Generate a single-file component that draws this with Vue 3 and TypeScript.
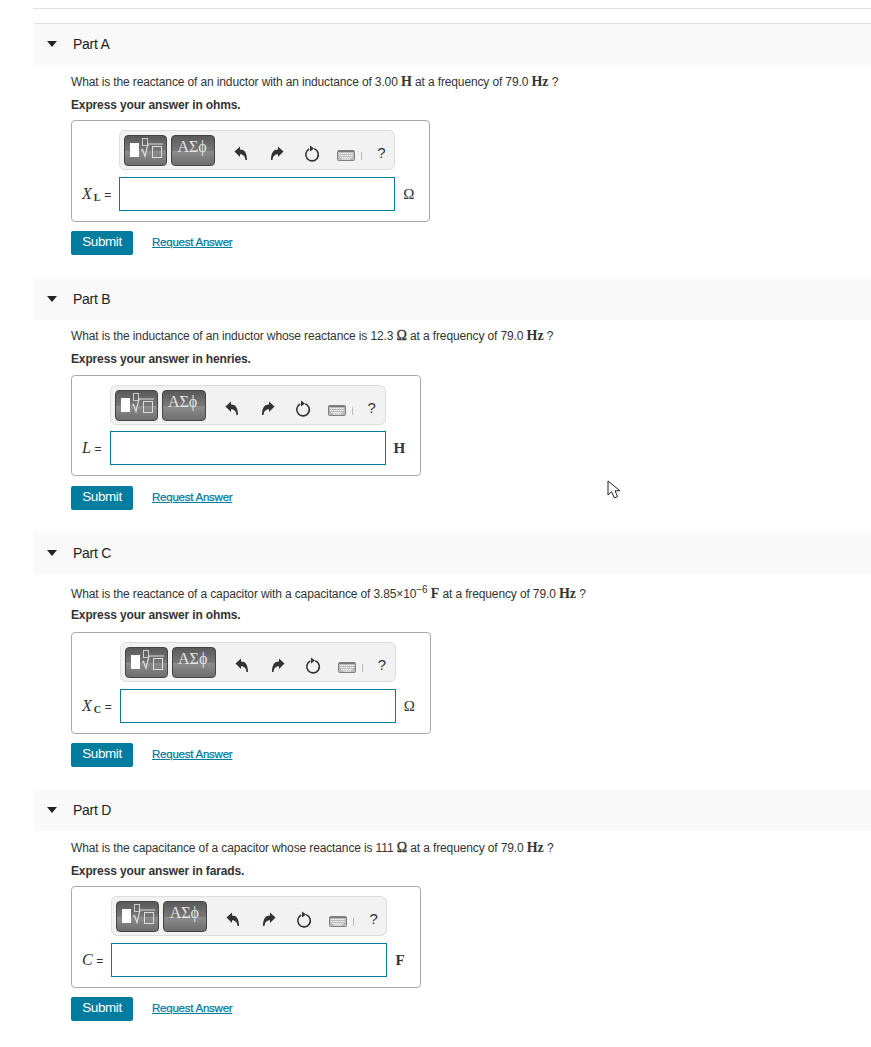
<template>
  <div class="page">
    <div class="rule"></div>
    <section v-for="part in parts" :key="part.name" class="part" :class="part.mod">
      <div class="part-head">
        <span class="caret"></span>
        <span class="part-name">{{ part.name }}</span>
      </div>
      <p class="question">
        <template v-for="(seg, i) in part.question" :key="i">
          <span v-if="seg.kind === 'math'" class="math" :class="{ omega: seg.text === 'Ω' }">{{ seg.text }}</span>
          <sup v-else-if="seg.kind === 'sup'" class="exp">{{ seg.text }}</sup>
          <template v-else>{{ seg.text }}</template>
        </template>
      </p>
      <p class="express">{{ part.express }}</p>
      <div class="answer-box">
        <div class="answer-label">
          <i>{{ part.symbol }}</i><span v-if="part.sub" class="sub">{{ part.sub }}</span>
          <span class="eq">=</span>
        </div>
        <div class="answer-main">
          <div class="toolbar">
            <button class="tpl-btn tpl-math" type="button">
              <svg width="41" height="29" viewBox="0 0 41 29">
                <rect x="5" y="7" width="9" height="14" fill="#fff" />
                <rect x="17.500" y="2.500" width="5" height="7" fill="none" stroke="#ccc" />
                <path d="M16 14.500l1.500-1 2.500 7 3-12.500h15" fill="none" stroke="#ddd" stroke-width="1.200" />
                <rect x="27.500" y="10.500" width="9" height="11" fill="none" stroke="#ddd" />
              </svg>
            </button>
            <button class="tpl-btn tpl-greek" type="button">ΑΣϕ</button>
            <svg class="tool undo" width="14" height="15" viewBox="0 0 14 15">
              <path d="M0.500 5.500L6 0.500V3.500C10.500 3.500 13 6.500 13 14H11.500C11 10.500 9.500 8.300 6 8.300V11Z" fill="#333" />
            </svg>
            <svg class="tool redo" width="14" height="15" viewBox="0 0 14 15">
              <path d="M13.500 5.500L8 0.500V3.500C3.500 3.500 1 6.500 1 14H2.500C3 10.500 4.500 8.300 8 8.300V11Z" fill="#333" />
            </svg>
            <svg class="tool reset" width="16" height="17" viewBox="0 0 16 17">
              <path d="M5.200 4A6.300 6.300 0 1 0 10.200 3.700" fill="none" stroke="#333" stroke-width="1.600" />
              <path d="M6 0.500L10 3.500L6 6.500Z" fill="#333" />
            </svg>
            <svg class="tool keyboard" width="18" height="11" viewBox="0 0 18 11">
              <rect x="0.500" y="0.500" width="17" height="10" rx="1" fill="#bbb" stroke="#808080" />
              <path d="M1 1.500h16" stroke="#777" />
              <path d="M2 3.500h14M2 5.500h14M3 7.500h12" stroke="#f2f2f2" stroke-dasharray="1.500 0.500" />
              <path d="M5 9h8" stroke="#eee" />
            </svg>
            <span class="sep"></span>
            <span class="help">?</span>
          </div>
          <input class="answer-input" type="text" />
        </div>
        <div class="answer-unit" :class="{ omega: part.unit === 'Ω' }">{{ part.unit }}</div>
      </div>
      <div class="actions">
        <button class="submit" type="button">Submit</button>
        <a class="request" href="#">Request Answer</a>
      </div>
    </section>
    <svg class="cursor" width="16" height="20" viewBox="0 0 16 20">
      <path d="M1 1V15L4.500 11.800L7.500 18L10.500 16.500L8 10.800H13Z" fill="#fff" stroke="#222" />
    </svg>
  </div>
</template>

<script setup lang="ts">
interface Seg {
  kind: 'text' | 'math' | 'sup'
  text: string
}

interface Part {
  name: string
  mod?: string
  question: Seg[]
  express: string
  symbol: string
  sub?: string
  unit: string
}

const t = (text: string): Seg => ({ kind: 'text', text })
const m = (text: string): Seg => ({ kind: 'math', text })

const parts: Part[] = [
  {
    name: 'Part A',
    mod: 'first',
    question: [t('What is the reactance of an inductor with an inductance of 3.00 '), m('H'), t(' at a frequency of 79.0 '), m('Hz'), t(' ?')],
    express: 'Express your answer in ohms.',
    symbol: 'X',
    sub: 'L',
    unit: 'Ω'
  },
  {
    name: 'Part B',
    mod: 'tight',
    question: [t('What is the inductance of an inductor whose reactance is 12.3 '), m('Ω'), t(' at a frequency of 79.0 '), m('Hz'), t(' ?')],
    express: 'Express your answer in henries.',
    symbol: 'L',
    unit: 'H'
  },
  {
    name: 'Part C',
    mod: 'has-exp',
    question: [t('What is the reactance of a capacitor with a capacitance of 3.85×10'), { kind: 'sup', text: '−6' }, t(' '), m('F'), t(' at a frequency of 79.0 '), m('Hz'), t(' ?')],
    express: 'Express your answer in ohms.',
    symbol: 'X',
    sub: 'C',
    unit: 'Ω'
  },
  {
    name: 'Part D',
    question: [t('What is the capacitance of a capacitor whose reactance is 111 '), m('Ω'), t(' at a frequency of 79.0 '), m('Hz'), t(' ?')],
    express: 'Express your answer in farads.',
    symbol: 'C',
    unit: 'F'
  }
]
</script>

<style>
html,
body {
  margin: 0;
  background: #fff;
}
</style>

<style scoped>
.page {
  position: relative;
  width: 871px;
  height: 1047px;
  overflow: hidden;
  padding-top: 8px;
  box-sizing: border-box;
  font-family: "Liberation Sans", Arial, sans-serif;
  font-size: 12px;
  color: #333;
}

.rule {
  height: 1px;
  margin-left: 33px;
  margin-bottom: 14px;
  background: #e2e2e2;
}

.part {
  margin-left: 34px;
  padding-bottom: 23px;
}

.part.first {
  padding-bottom: 24px;
}

.part-head {
  display: flex;
  align-items: center;
  height: 41px;
  padding-bottom: 1px;
  box-sizing: border-box;
  background: #f9f9f9;
}

.first .part-head {
  border-top: 1px solid #e2e2e2;
  height: 42px;
}

.caret {
  width: 0;
  height: 0;
  margin-left: 13px;
  border-left: 5px solid transparent;
  border-right: 5px solid transparent;
  border-top: 6px solid #222;
}

.part-name {
  margin-left: 16px;
  font-size: 14px;
  letter-spacing: -0.25px;
  color: #222;
}

.question {
  margin: 9px 0 0 37px;
  line-height: 16px;
  letter-spacing: -0.13px;
}

.tight .question {
  margin-top: 8px;
}

.has-exp .question {
  margin-top: 11px;
}

.math {
  font-family: "Liberation Serif", serif;
  font-weight: bold;
  font-size: 14px;
  letter-spacing: 0;
  line-height: 1;
}

.omega {
  font-weight: normal;
  -webkit-text-stroke: 0.3px;
}

.exp {
  font-size: 10px;
  line-height: 1;
  vertical-align: 5px;
}

.express {
  margin: 7px 0 0 37px;
  line-height: 16px;
  font-weight: bold;
  letter-spacing: -0.14px;
}

.has-exp .express {
  margin-top: 5px;
}

.answer-box {
  display: inline-flex;
  align-items: flex-end;
  margin: 7px 0 0 37px;
  padding: 9px 0 10px;
  border: 1px solid #aaa;
  border-radius: 4px;
}

.has-exp .answer-box {
  margin-top: 9px;
}

.tight .answer-box {
  margin-top: 8px;
}

.answer-label {
  display: flex;
  align-items: baseline;
  height: 34px;
  line-height: 34px;
  padding: 0 8px 0 10px;
  font-family: "Liberation Serif", serif;
  font-size: 16px;
}

.sub {
  margin-left: 2px;
  font-size: 10px;
  font-weight: bold;
  line-height: 1;
  transform: translateY(2px);
}

.eq {
  margin-left: 3.700px;
  font-family: "Liberation Sans", sans-serif;
  font-size: 12px;
}

.answer-main {
  width: 276px;
}

.toolbar {
  display: flex;
  align-items: center;
  box-sizing: border-box;
  height: 40px;
  margin-bottom: 7px;
  padding-left: 4px;
  background: #f2f2f2;
  border: 1px solid #ddd;
  border-radius: 6px;
}

.tight .toolbar {
  margin-bottom: 6px;
}

.tpl-btn {
  box-sizing: border-box;
  height: 31px;
  padding: 0;
  border: 1px solid #444;
  border-radius: 4px;
  background: linear-gradient(#5a5a5a 0, #787878 52%, #8c8c8c 53%, #6e6e6e 100%);
}

.tpl-math {
  width: 43px;
}

.tpl-math svg {
  display: block;
}

.tpl-greek {
  width: 44px;
  margin-left: 4px;
  padding: 0 2px 6px 0;
  font-family: "Liberation Serif", serif;
  font-size: 16px;
  color: #e4e4e4;
}

.tool {
  flex: none;
}

.undo {
  margin: 6px 0 0 19px;
}

.redo {
  margin: 6px 0 0 22px;
}

.reset {
  margin: 6px 0 0 20px;
}

.keyboard {
  margin: 10px 0 0 17px;
}

.sep {
  width: 1px;
  height: 8px;
  margin: 12px 0 0 6px;
  background: #bbb;
}

.help {
  margin: 5px 0 0 15px;
  font-size: 15px;
  color: #333;
}

.answer-input {
  display: block;
  box-sizing: border-box;
  width: 100%;
  height: 34px;
  border: 1px solid #007c9f;
  background: #fff;
  outline: none;
}

.answer-unit {
  height: 34px;
  line-height: 34px;
  padding: 0 15px 0 8px;
  font-family: "Liberation Serif", serif;
  font-weight: bold;
  font-size: 15px;
}

.answer-unit.omega {
  font-weight: normal;
  -webkit-text-stroke: 0;
}

.actions {
  display: flex;
  align-items: center;
  margin: 9px 0 0 37px;
}

.tight .actions {
  margin-top: 10px;
}

.submit {
  width: 62px;
  height: 24px;
  padding: 0 0 3px;
  border: 0;
  border-radius: 2px;
  background: #007c9f;
  color: #fff;
  font-family: inherit;
  font-size: 13.500px;
  letter-spacing: -0.4px;
}

.request {
  margin-left: 19px;
  margin-bottom: 2px;
  color: #007c9f;
  font-size: 11.500px;
  letter-spacing: -0.24px;
  -webkit-text-stroke: 0.25px;
}

.cursor {
  position: absolute;
  left: 607px;
  top: 480px;
}
</style>
